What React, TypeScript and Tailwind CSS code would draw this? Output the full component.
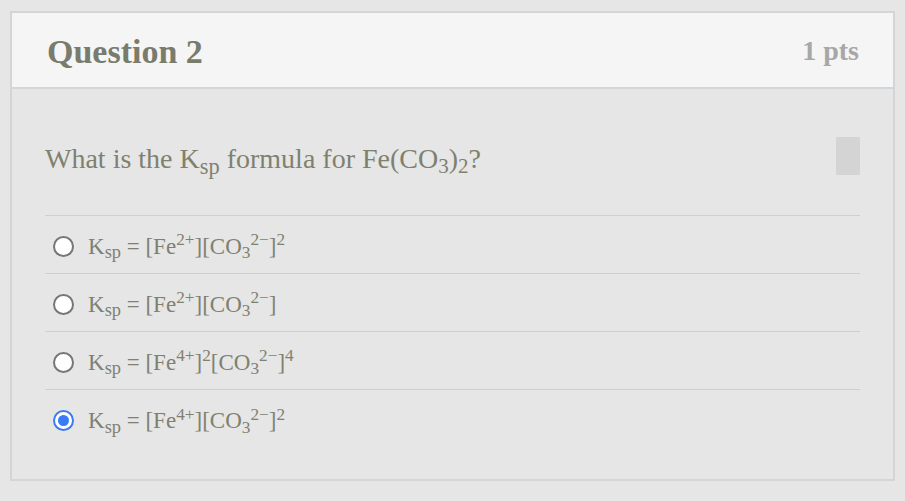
import type { ReactNode } from "react";

const serif = "font-['Liberation_Serif','DejaVu_Serif',serif]";

const Ksp = () => (
  <>
    K<sub className="text-[80%]">sp</sub>
  </>
);

const options: { id: number; body: ReactNode; checked?: boolean }[] = [
  {
    id: 1,
    body: (
      <>
        <Ksp /> = [Fe<sup>2+</sup>][CO<sub>3</sub>
        <sup>2−</sup>]<sup>2</sup>
      </>
    ),
  },
  {
    id: 2,
    body: (
      <>
        <Ksp /> = [Fe<sup>2+</sup>][CO<sub>3</sub>
        <sup>2−</sup>]
      </>
    ),
  },
  {
    id: 3,
    body: (
      <>
        <Ksp /> = [Fe<sup>4+</sup>]<sup>2</sup>[CO<sub>3</sub>
        <sup>2−</sup>]<sup>4</sup>
      </>
    ),
  },
  {
    id: 4,
    checked: true,
    body: (
      <>
        <Ksp /> = [Fe<sup>4+</sup>][CO<sub>3</sub>
        <sup>2−</sup>]<sup>2</sup>
      </>
    ),
  },
];

const Radio = ({ checked }: { checked?: boolean }) =>
  checked ? (
    <span className="ml-[8px] mt-[3px] flex h-[21px] w-[21px] shrink-0 items-center justify-center rounded-full border-2 border-[#3b7bf3] bg-white">
      <span className="h-[11px] w-[11px] rounded-full bg-[#3b7bf3]" />
    </span>
  ) : (
    <span className="ml-[8px] mt-[3px] h-[21px] w-[21px] shrink-0 rounded-full border-2 border-[#767676] bg-white" />
  );

export default function App() {
  return (
    <div className={`min-h-screen bg-[#e6e6e6] px-[10px] pt-[11px] ${serif}`}>
      <div className="border-2 border-[#d3d6d9]">
        <div className="flex h-[76px] items-center justify-between border-b-2 border-[#d3d6d9] bg-[#f5f5f5] pl-[35px] pr-[34px]">
          <h2 className="mt-[3px] text-[34px] font-bold text-[#797b6d]">Question 2</h2>
          <span className="mt-[2px] text-[28px] font-bold text-[#a7a7a7]">1 pts</span>
        </div>
        <div className="px-[33px] pb-[31px]">
          <div className="flex items-start justify-between pb-[35px] pt-[48px]">
            <p className="mt-[1px] text-[28px] text-[#7f8170]">
              What is the <Ksp /> formula for Fe(CO<sub>3</sub>)<sub>2</sub>?
            </p>
            <div className="h-[38px] w-[24px] bg-[#d4d4d4]" />
          </div>
          <ul className="border-t border-[#cdd0d3]">
            {options.map((o, i) => (
              <li
                key={o.id}
                className={`flex h-[58px] items-center gap-[14px] ${
                  i < options.length - 1 ? "border-b border-[#cdd0d3]" : ""
                }`}
              >
                <Radio checked={o.checked} />
                <span className="pt-[5px] text-[23px] text-[#7f8170]">{o.body}</span>
              </li>
            ))}
          </ul>
        </div>
      </div>
    </div>
  );
}
